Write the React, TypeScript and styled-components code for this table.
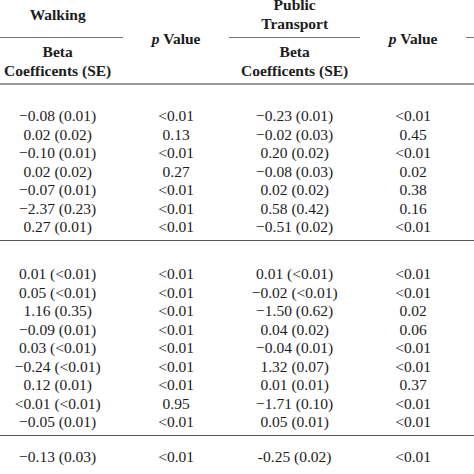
import React from 'react'
import styled, { createGlobalStyle } from 'styled-components'

const GlobalStyle = createGlobalStyle`
  html, body {
    margin: 0;
    padding: 0;
    background: #fff;
  }
  body {
    width: 474px;
    height: 474px;
    overflow: hidden;
    font-family: "Liberation Serif", "Times New Roman", serif;
    color: #1c1c1c;
  }
`

type Row = [string, string, string, string]

const groupOne: Row[] = [
  ['−0.08 (0.01)', '<0.01', '−0.23 (0.01)', '<0.01'],
  ['0.02 (0.02)', '0.13', '−0.02 (0.03)', '0.45'],
  ['−0.10 (0.01)', '<0.01', '0.20 (0.02)', '<0.01'],
  ['0.02 (0.02)', '0.27', '−0.08 (0.03)', '0.02'],
  ['−0.07 (0.01)', '<0.01', '0.02 (0.02)', '0.38'],
  ['−2.37 (0.23)', '<0.01', '0.58 (0.42)', '0.16'],
  ['0.27 (0.01)', '<0.01', '−0.51 (0.02)', '<0.01'],
]

const groupTwo: Row[] = [
  ['0.01 (<0.01)', '<0.01', '0.01 (<0.01)', '<0.01'],
  ['0.05 (<0.01)', '<0.01', '−0.02 (<0.01)', '<0.01'],
  ['1.16 (0.35)', '<0.01', '−1.50 (0.62)', '0.02'],
  ['−0.09 (0.01)', '<0.01', '0.04 (0.02)', '0.06'],
  ['0.03 (<0.01)', '<0.01', '−0.04 (0.01)', '<0.01'],
  ['−0.24 (<0.01)', '<0.01', '1.32 (0.07)', '<0.01'],
  ['0.12 (0.01)', '<0.01', '0.01 (0.01)', '0.37'],
  ['<0.01 (<0.01)', '0.95', '−1.71 (0.10)', '<0.01'],
  ['−0.05 (0.01)', '<0.01', '0.05 (0.01)', '<0.01'],
]

const groupThree: Row[] = [
  ['−0.13 (0.03)', '<0.01', '-0.25 (0.02)', '<0.01'],
]

export default function App() {
  return (
    <>
      <GlobalStyle />
      <Page>
        <Table>
          <colgroup>
            <Col $w={130.5} />
            <Col $w={106.5} />
            <Col $w={130.5} />
            <Col $w={106.5} />
            <Col $w={130.5} />
          </colgroup>
          <thead>
            <tr>
              <GroupHead>Walking</GroupHead>
              <PHead rowSpan={2}><em>p</em> Value</PHead>
              <GroupHead>Public<br />Transport</GroupHead>
              <PHead rowSpan={2}><em>p</em> Value</PHead>
              <GroupHead />
            </tr>
            <tr>
              <SubHead>Beta<br />Coefficents (SE)</SubHead>
              <SubHead>Beta<br />Coefficents (SE)</SubHead>
              <SubHead />
            </tr>
          </thead>
          <Group $top={22} $bottom={3.5} $rule>
            {groupOne.map((r, i) => (
              <DataRow key={i} cells={r} />
            ))}
          </Group>
          <Group $top={24} $bottom={3} $rule>
            {groupTwo.map((r, i) => (
              <DataRow key={i} cells={r} />
            ))}
          </Group>
          <Group $top={12.5} $bottom={10}>
            {groupThree.map((r, i) => (
              <DataRow key={i} cells={r} />
            ))}
          </Group>
        </Table>
      </Page>
    </>
  )
}

const DataRow = ({ cells }: { cells: Row }) => (
  <tr>
    {cells.map((c, i) => (
      <Cell key={i}>{c}</Cell>
    ))}
    <Cell />
  </tr>
)

const Page = styled.div`
  width: 474px;
  height: 474px;
  overflow: hidden;
`

const Table = styled.table`
  border-collapse: separate;
  border-spacing: 0;
  table-layout: fixed;
  width: 604.5px;
  margin: -9px 0 0 -7.6px;
  font-size: 15.5px;
  line-height: 18.5px;
`

const Col = styled.col<{ $w: number }>`
  width: ${p => p.$w}px;
`

const GroupHead = styled.th`
  height: 46px;
  padding: 0;
  font-weight: bold;
  line-height: 19px;
  text-align: center;
  vertical-align: middle;
  border-bottom: 1px solid #777;
`

const PHead = styled.th`
  padding: 5px 0 0;
  font-weight: bold;
  text-align: center;
  vertical-align: middle;
  border-bottom: 2.5px solid #999;

  em {
    font-style: italic;
  }
`

const SubHead = styled.th`
  height: 43px;
  padding: 2px 0 0;
  font-weight: bold;
  line-height: 18.5px;
  text-align: center;
  vertical-align: middle;
  border-bottom: 2.5px solid #999;
`

const Group = styled.tbody<{ $top: number; $bottom: number; $rule?: boolean }>`
  tr:first-child td {
    padding-top: ${p => p.$top}px;
  }
  tr:last-child td {
    padding-bottom: ${p => p.$bottom}px;
    border-bottom: ${p => (p.$rule ? '1.5px solid #555' : 'none')};
  }
`

const Cell = styled.td`
  padding: 0;
  height: 18.5px;
  text-align: center;
  white-space: nowrap;
`
